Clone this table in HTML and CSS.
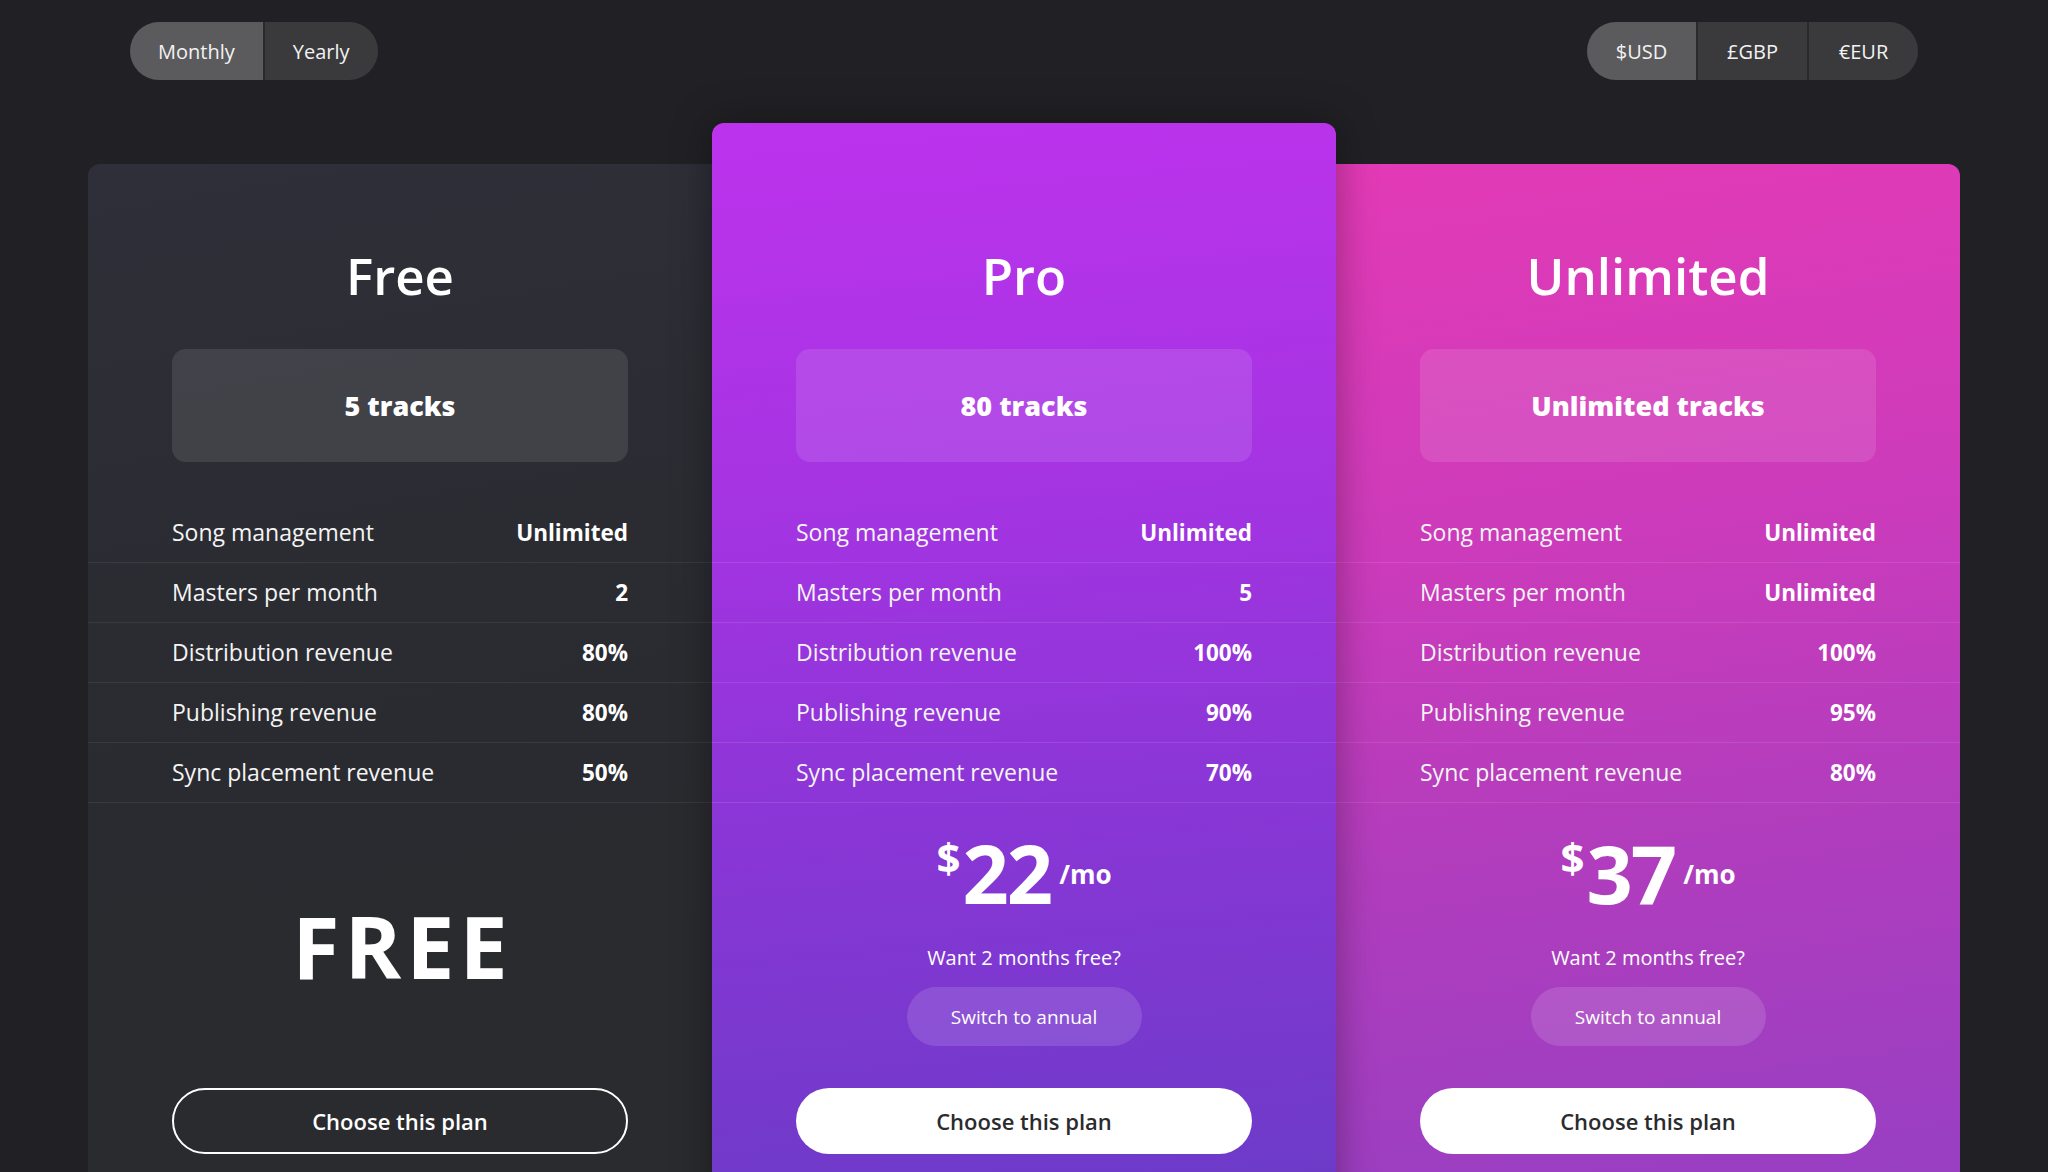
FILE: index.html
```html
<!DOCTYPE html>
<html lang="en">
<head>
<meta charset="utf-8">
<title>Pricing</title>
<link rel="stylesheet" href="styles.css">
</head>
<body>
<div class="page">
  <header class="topbar">
    <div class="seg">
      <button class="seg-btn active">Monthly</button>
      <button class="seg-btn">Yearly</button>
    </div>
    <div class="seg">
      <button class="seg-btn cur active">$USD</button>
      <button class="seg-btn cur">£GBP</button>
      <button class="seg-btn cur">€EUR</button>
    </div>
  </header>

  <main class="plans">
    <section class="card card-free">
      <h2 class="plan-title">Free</h2>
      <div class="tracks">5 tracks</div>
      <ul class="features">
        <li><span>Song management</span><b>Unlimited</b></li>
        <li><span>Masters per month</span><b>2</b></li>
        <li><span>Distribution revenue</span><b>80%</b></li>
        <li><span>Publishing revenue</span><b>80%</b></li>
        <li><span>Sync placement revenue</span><b>50%</b></li>
      </ul>
      <div class="price-area center">
        <div class="free-label">FREE</div>
      </div>
      <button class="choose outline">Choose this plan</button>
    </section>

    <section class="card card-pro">
      <h2 class="plan-title">Pro</h2>
      <div class="tracks">80 tracks</div>
      <ul class="features">
        <li><span>Song management</span><b>Unlimited</b></li>
        <li><span>Masters per month</span><b>5</b></li>
        <li><span>Distribution revenue</span><b>100%</b></li>
        <li><span>Publishing revenue</span><b>90%</b></li>
        <li><span>Sync placement revenue</span><b>70%</b></li>
      </ul>
      <div class="price-area">
        <div class="price"><span class="cur-sym">$</span><span class="amount">22</span><span class="per">/mo</span></div>
        <p class="promo">Want 2 months free?</p>
        <button class="switch">Switch to annual</button>
      </div>
      <button class="choose solid">Choose this plan</button>
    </section>

    <section class="card card-unl">
      <h2 class="plan-title">Unlimited</h2>
      <div class="tracks">Unlimited tracks</div>
      <ul class="features">
        <li><span>Song management</span><b>Unlimited</b></li>
        <li><span>Masters per month</span><b>Unlimited</b></li>
        <li><span>Distribution revenue</span><b>100%</b></li>
        <li><span>Publishing revenue</span><b>95%</b></li>
        <li><span>Sync placement revenue</span><b>80%</b></li>
      </ul>
      <div class="price-area">
        <div class="price"><span class="cur-sym">$</span><span class="amount">37</span><span class="per">/mo</span></div>
        <p class="promo">Want 2 months free?</p>
        <button class="switch">Switch to annual</button>
      </div>
      <button class="choose solid">Choose this plan</button>
    </section>
  </main>
</div>
</body>
</html>
```

FILE: styles.css
```css
html, body {
  margin: 0;
  padding: 0;
  overflow: hidden;
}
body {
  background: #212125;
  font-family: "Open Sans", "Noto Sans", Arial, sans-serif;
  color: #fff;
}
button {
  font-family: inherit;
  border: 0;
  cursor: pointer;
}

.topbar {
  display: flex;
  justify-content: space-between;
  padding: 22px 130px 0;
}
.seg {
  display: flex;
  gap: 2px;
  height: 58px;
  border-radius: 29px;
  overflow: hidden;
  background: #2a2a2d;
}
.seg-btn {
  background: #3a3a3d;
  color: #f2f2f2;
  font-size: 20px;
  padding: 0 28px;
  height: 58px;
}
.seg-btn.cur {
  width: 109px;
  padding: 0;
  font-size: 20px;
}
.seg-btn.active {
  background: #5b5b5e;
}

.plans {
  display: flex;
  align-items: flex-start;
  padding: 0 88px;
  margin-top: 43px;
}
.card {
  flex: 1 1 0;
  display: flex;
  flex-direction: column;
  align-items: stretch;
  padding: 81px 0 60px;
  margin-top: 41px;
}
.card-free {
  background: linear-gradient(170deg, #2e2f38 0%, #2a2b30 55%, #2a2b2e 100%);
  border-radius: 12px 0 0 0;
}
.card-pro {
  position: relative;
  z-index: 2;
  margin-top: 0;
  padding-top: 122px;
  border-radius: 12px 12px 0 0;
  background: linear-gradient(175deg, #bd33ed 0%, #a434e2 35%, #8a36d6 62%, #6a3bc7 100%);
  box-shadow: 0 0 40px rgba(0, 0, 0, 0.35);
}
.card-unl {
  border-radius: 0 12px 0 0;
  background: linear-gradient(172deg, #e33ab6 0%, #cc3bbb 35%, #b23dbd 62%, #953fc3 100%);
}

.plan-title {
  margin: 0;
  text-align: center;
  font-size: 51px;
  line-height: 60px;
  font-weight: 600;
}
.tracks {
  margin: 44px 84px 0;
  height: 113px;
  border-radius: 14px;
  background: rgba(255, 255, 255, 0.11);
  display: flex;
  align-items: center;
  justify-content: center;
  font-size: 27px;
  font-weight: 800;
}
.card-free .tracks {
  background: rgba(255, 255, 255, 0.1);
}

.features {
  list-style: none;
  margin: 41px 0 0;
  padding: 0;
}
.features li {
  display: flex;
  justify-content: space-between;
  align-items: baseline;
  height: 59px;
  line-height: 59px;
  padding: 0 84px;
  border-bottom: 1px solid rgba(255, 255, 255, 0.1);
  font-size: 23px;
}
.card-free .features li {
  border-bottom-color: rgba(255, 255, 255, 0.07);
}
.features span {
  color: #f4f4f4;
}
.features b {
  font-weight: 700;
  font-size: 22.5px;
}

.price-area {
  height: 256px;
  padding-top: 29px;
  display: flex;
  flex-direction: column;
  align-items: center;
}
.price-area.center {
  justify-content: center;
  padding-top: 0;
  height: 285px;
}
.free-label {
  font-size: 86px;
  line-height: 86px;
  font-weight: 700;
  letter-spacing: 5px;
  margin-left: 5px;
}
.price {
  display: flex;
  align-items: flex-start;
  height: 81px;
}
.cur-sym {
  font-size: 42px;
  line-height: 42px;
  font-weight: 700;
  margin-top: 4px;
  margin-right: 2px;
}
.amount {
  font-size: 81px;
  line-height: 81px;
  font-weight: 700;
  letter-spacing: -2px;
}
.per {
  font-size: 26px;
  line-height: 26px;
  font-weight: 700;
  margin-top: 29px;
  margin-left: 8px;
}
.promo {
  margin: 32px 0 0;
  font-size: 20px;
  line-height: 26px;
}
.switch {
  margin-top: 16px;
  height: 59px;
  width: 235px;
  border-radius: 30px;
  background: rgba(255, 255, 255, 0.13);
  color: #fff;
  font-size: 19px;
}
.choose {
  margin: 0 84px;
  height: 66px;
  border-radius: 33px;
  font-size: 22px;
  font-weight: 600;
}
.choose.solid {
  background: #fff;
  color: #2b2b2e;
}
.choose.outline {
  background: transparent;
  color: #fff;
  border: 2px solid #fff;
}
```
